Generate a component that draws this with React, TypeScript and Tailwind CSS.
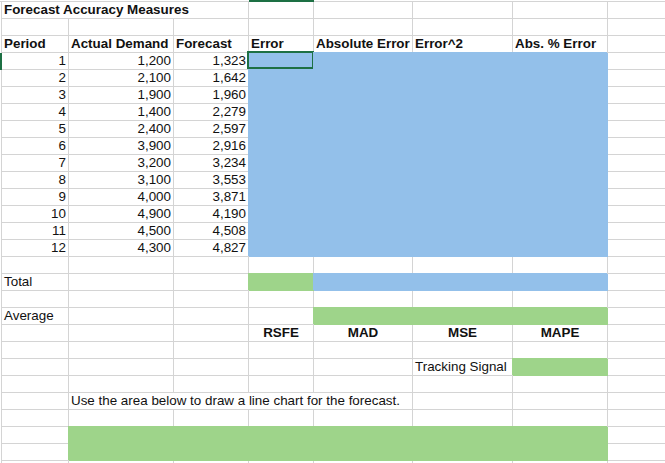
type Fill = 'blue' | 'green'

type CellDef = {
  text?: string
  align?: 'left' | 'right' | 'center'
  bold?: boolean
  fill?: Fill
  span?: 3 | 4 | 6
  selected?: boolean
}

const data: [string, string, string][] = [
  ['1', '1,200', '1,323'],
  ['2', '2,100', '1,642'],
  ['3', '1,900', '1,960'],
  ['4', '1,400', '2,279'],
  ['5', '2,400', '2,597'],
  ['6', '3,900', '2,916'],
  ['7', '3,200', '3,234'],
  ['8', '3,100', '3,553'],
  ['9', '4,000', '3,871'],
  ['10', '4,900', '4,190'],
  ['11', '4,500', '4,508'],
  ['12', '4,300', '4,827'],
]

const blank = (n: number): CellDef[] => Array.from({ length: n }, () => ({}))

const rows: CellDef[][] = [
  [{ text: 'Forecast Accuracy Measures', bold: true, span: 3 }, ...blank(5)],
  blank(8),
  [
    { text: 'Period', bold: true },
    { text: 'Actual Demand', bold: true },
    { text: 'Forecast', bold: true },
    { text: 'Error', bold: true },
    { text: 'Absolute Error', bold: true },
    { text: 'Error^2', bold: true },
    { text: 'Abs. % Error', bold: true },
    {},
  ],
  ...data.map(([p, a, f], i) => [
    { text: p, align: 'right' as const },
    { text: a, align: 'right' as const },
    { text: f, align: 'right' as const },
    { fill: 'blue' as const, selected: i === 0 },
    { fill: 'blue' as const },
    { fill: 'blue' as const },
    { fill: 'blue' as const },
    {},
  ]),
  blank(8),
  [{ text: 'Total' }, {}, {}, { fill: 'green' }, { fill: 'blue' }, { fill: 'blue' }, { fill: 'blue' }, {}],
  blank(8),
  [{ text: 'Average' }, {}, {}, {}, { fill: 'green' }, { fill: 'green' }, { fill: 'green' }, {}],
  [
    {},
    {},
    {},
    { text: 'RSFE', bold: true, align: 'center' },
    { text: 'MAD', bold: true, align: 'center' },
    { text: 'MSE', bold: true, align: 'center' },
    { text: 'MAPE', bold: true, align: 'center' },
    {},
  ],
  blank(8),
  [{}, {}, {}, {}, {}, { text: 'Tracking Signal' }, { fill: 'green' }, {}],
  blank(8),
  [{}, { text: 'Use the area below to draw a line chart for the forecast.', span: 4 }, {}, {}, {}],
  blank(8),
  [{}, { fill: 'green', span: 6 }, {}],
  [{}, { fill: 'green', span: 6 }, {}],
  blank(8),
]

const fills: Record<Fill, string> = {
  blue: 'bg-[#93c0ea] border-[#93c0ea] shadow-[-1px_-1px_0_0_#93c0ea]',
  green: 'bg-[#9ed48a] border-[#9ed48a] shadow-[-1px_-1px_0_0_#9ed48a]',
}

const spans = { 3: 'col-span-3', 4: 'col-span-4', 6: 'col-span-6' }

function Cell({ cell }: { cell: CellDef }) {
  const align =
    cell.align === 'right' ? 'text-right pr-[2px]' : cell.align === 'center' ? 'text-center' : 'text-left pl-[2px]'
  return (
    <div
      className={`relative h-[17px] border-r border-b whitespace-nowrap text-[13.4px] leading-[16px] text-[#111] ${
        cell.fill ? fills[cell.fill] : 'border-[#d4d4d4]'
      } ${align} ${cell.bold ? 'font-bold' : ''} ${cell.span ? spans[cell.span] : ''}`}
    >
      {cell.text}
      {cell.selected && (
        <div className="absolute -left-[2px] -top-[2px] -right-px bottom-0 border-2 border-[#1d7044]" />
      )}
    </div>
  )
}

export default function App() {
  return (
    <div
      className="w-[665px] h-[463px] overflow-hidden bg-white"
      style={{ fontFamily: '"Liberation Sans", Arial, sans-serif' }}
    >
      <div className="grid grid-cols-[2px_67px_105px_75px_65px_99px_100px_95px_120px] w-[728px]">
        {/* top header edge */}
        <div className="h-[2px] border-b border-[#d4d4d4]" />
        <div className="col-span-3 h-[2px] border-b border-[#d4d4d4]" />
        <div className="h-[2px] bg-[#1d7044]" />
        <div className="col-span-4 h-[2px] border-b border-[#d4d4d4]" />

        {rows.map((row, r) => (
          <div key={r} className="contents">
            <div className={r === 3 ? 'bg-[#1d7044]' : 'border-r border-[#d4d4d4]'} />
            {row.map((cell, c) => (
              <Cell key={c} cell={cell} />
            ))}
          </div>
        ))}
      </div>
    </div>
  )
}
